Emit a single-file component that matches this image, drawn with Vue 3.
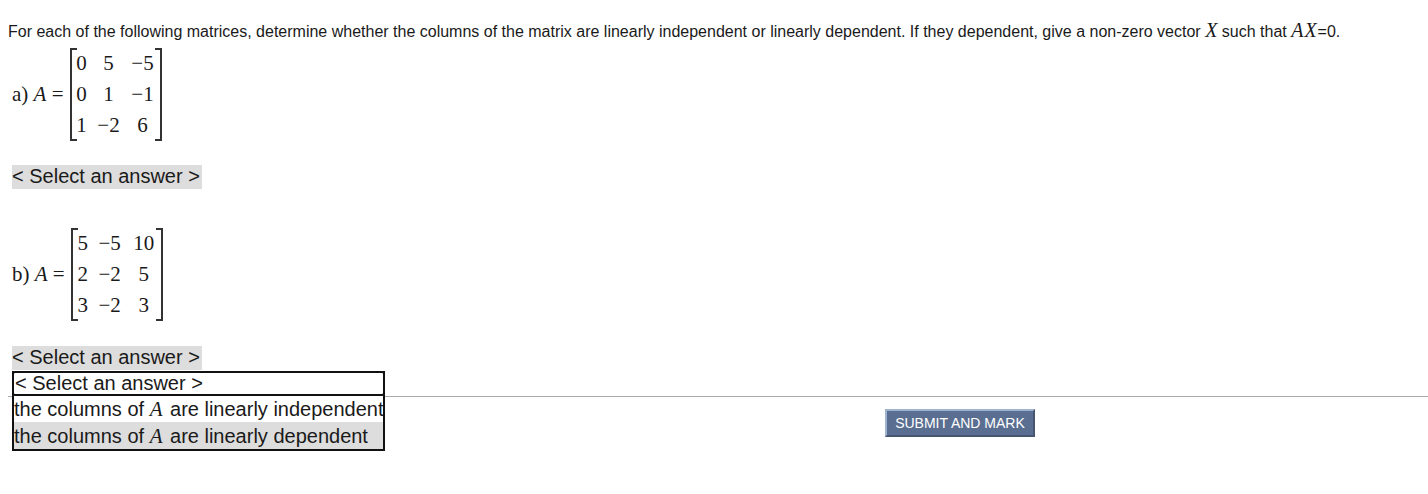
<script setup>
const matrices = [
  {
    label: 'a)',
    rows: [['0', '5', '−5'], ['0', '1', '−1'], ['1', '−2', '6']],
    open: false
  },
  {
    label: 'b)',
    rows: [['5', '−5', '10'], ['2', '−2', '5'], ['3', '−2', '3']],
    open: true
  }
]
</script>

<template>
  <div class="page">
    <p class="question">
      For each of the following matrices, determine whether the columns of the matrix are linearly independent or linearly dependent. If they dependent, give a non-zero vector <i class="math">X</i> such that <i class="math wide">AX</i>=0.
    </p>

    <div v-for="m in matrices" :key="m.label" class="part">
      <div class="equation">
        <span class="label">{{ m.label }} <i>A</i> =</span>
        <div class="matrix">
          <template v-for="(row, i) in m.rows" :key="i">
            <span v-for="(cell, j) in row" :key="j" class="cell">{{ cell }}</span>
          </template>
        </div>
      </div>
      <div class="answer-wrap">
        <span class="answer">&lt; Select an answer &gt;</span>
        <div v-if="m.open" class="menu">
          <div class="option current">&lt; Select an answer &gt;</div>
          <div class="option">the columns of <i class="math">A</i> are linearly independent</div>
          <div class="option hover">the columns of <i class="math">A</i> are linearly dependent</div>
        </div>
      </div>
    </div>

    <div class="footer">
      <button class="submit">SUBMIT AND MARK</button>
    </div>
  </div>
</template>

<style>
html,
body {
  margin: 0;
  background: #ffffff;
}
</style>

<style scoped>
.page {
  width: 1428px;
  height: 494px;
  overflow: hidden;
  box-sizing: border-box;
  padding-top: 21px;
  font-family: "Liberation Sans", Arial, sans-serif;
  color: #1a1a1a;
}

.question {
  margin: 0 0 0 8px;
  font-size: 16px;
  line-height: 18px;
  white-space: nowrap;
}

.math {
  font-family: "Liberation Serif", serif;
  font-size: 20px;
  line-height: 18px;
}

.math.wide {
  letter-spacing: 1px;
}

.part {
  margin-left: 12px;
}

.equation {
  display: flex;
  align-items: center;
  height: 94px;
  margin-top: 6px;
  font-family: "Liberation Serif", serif;
  font-size: 21px;
}

.part + .part .equation {
  margin-top: 38px;
}

.label {
  margin-right: 6px;
  white-space: nowrap;
}

.matrix {
  display: grid;
  grid-template-columns: 18px 36px 32px;
  grid-auto-rows: 31px;
  align-items: center;
  justify-items: center;
  width: 87px;
  height: 93px;
  padding: 0 0 0 1px;
  border-left: 2px solid #333333;
  border-right: 2px solid #333333;
  position: relative;
}

.matrix::before,
.matrix::after {
  content: "";
  position: absolute;
  left: 0;
  right: 0;
  height: 2px;
  background: linear-gradient(to right, #333333 5px, transparent 5px, transparent calc(100% - 5px), #333333 calc(100% - 5px));
}

.matrix::before {
  top: 0;
}

.matrix::after {
  bottom: 0;
}

.cell {
  font-size: 21px;
  line-height: 31px;
}

.answer-wrap {
  position: relative;
  margin-top: 24px;
  height: 24px;
}

.part + .part .answer-wrap {
  margin-top: 25px;
}

.answer {
  display: inline-block;
  padding: 0 2px 2px 0;
  font-size: 20px;
  line-height: 22px;
  background: #dddddd;
}

.menu {
  position: absolute;
  z-index: 2;
  top: 25px;
  left: 0;
  width: 373px;
  box-sizing: border-box;
  background: #ffffff;
  border: solid #111111;
  border-width: 0 2px 2px 2px;
  font-size: 20px;
}

.menu .math {
  font-size: 21px;
  margin-right: 2px;
}

.option {
  height: 26px;
  line-height: 26px;
  white-space: nowrap;
}

.option.current {
  height: 25px;
  line-height: 21px;
  margin: 0 -2px;
  padding-left: 1px;
  border: 2px solid #111111;
  border-radius: 3px;
  box-sizing: border-box;
}

.option.hover {
  height: 27px;
  line-height: 28px;
  background: #dddddd;
}

.footer {
  display: flex;
  justify-content: center;
  align-items: center;
  margin: 26px 0 0 8px;
  padding: 12px 0 0 484px;
  border-top: 1px solid #aaaaaa;
}

.submit {
  width: 150px;
  height: 28px;
  padding: 0;
  font-family: "Liberation Sans", Arial, sans-serif;
  font-size: 14px;
  color: #ffffff;
  background: #5a6e91;
  border: 2px solid;
  border-color: #9db3cf #47556e #47556e #9db3cf;
}
</style>
